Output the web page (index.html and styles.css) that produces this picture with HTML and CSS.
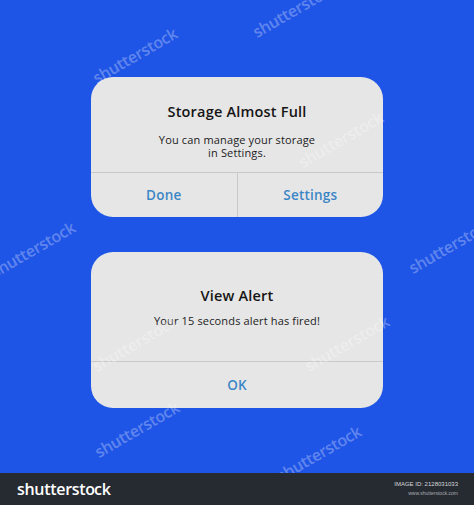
FILE: index.html
```html
<!DOCTYPE html>
<html lang="en">
<head>
  <meta charset="UTF-8" />
  <meta name="viewport" content="width=device-width, initial-scale=1.0"/>
  <title>Alert dialogs</title>
  <link rel="stylesheet" href="styles.css">
</head>
<body>
  <main class="lienzo">
    <!-- ALERTA DE ALMACENAMIENTO -->
    <div class="alerta alerta-storage">
      <div class="alerta-cuerpo">
        <h2>Storage Almost Full</h2>
        <p>You can manage your storage<br>in Settings.</p>
      </div>
      <div class="alerta-botones">
        <button>Done</button>
        <button>Settings</button>
      </div>
    </div>

    <!-- ALERTA DE TEMPORIZADOR -->
    <div class="alerta alerta-timer">
      <div class="alerta-cuerpo">
        <h2>View Alert</h2>
        <p>Your 15 seconds alert has fired!</p>
      </div>
      <div class="alerta-botones">
        <button>OK</button>
      </div>
    </div>

    <!-- marcas de agua -->
    <span class="marca" style="left: 94px; top: 68px;">shutterstock</span>
    <span class="marca" style="left: 254px; top: 22px;">shutterstock</span>
    <span class="marca" style="left: 300px; top: 152px;">shutterstock</span>
    <span class="marca" style="left: 410px; top: 258px;">shutterstock</span>
    <span class="marca" style="left: -8px; top: 262px;">shutterstock</span>
    <span class="marca" style="left: 94px; top: 356px;">shutterstock</span>
    <span class="marca" style="left: 306px; top: 356px;">shutterstock</span>
    <span class="marca" style="left: 96px; top: 442px;">shutterstock</span>
    <span class="marca" style="left: 278px; top: 466px;">shutterstock</span>
  </main>

  <footer class="pie">
    <span class="logo">shutterst<span class="logo-o">o</span>ck</span>
    <div class="pie-info">
      <span>IMAGE ID: 2128031033</span>
      <span class="pie-url">www.shutterstock.com</span>
    </div>
  </footer>
</body>
</html>
```
FILE: styles.css
```css
body {
  margin: 0;
  padding: 0;
  font-family: "Open Sans", "Noto Sans", sans-serif;
  background-color: #1f55e6;
  width: 474px;
  height: 505px;
  overflow: hidden;
}

.lienzo {
  position: relative;
  height: 473px;
  display: flex;
  flex-direction: column;
  align-items: center;
  padding-top: 77px;
  gap: 35px;
  box-sizing: border-box;
  overflow: hidden;
}

.alerta {
  width: 292px;
  background-color: #e6e6e6;
  border-radius: 22px;
  display: flex;
  flex-direction: column;
  overflow: hidden;
}

.alerta-cuerpo {
  text-align: center;
  border-bottom: 1px solid #c9c9c9;
  box-sizing: border-box;
}
.alerta h2 {
  margin: 0;
  font-size: 14.5px;
  font-weight: 600;
  color: #151515;
  letter-spacing: 0.2px;
}
.alerta p {
  margin: 0;
  font-size: 11px;
  line-height: 13px;
  color: #222;
  letter-spacing: 0.15px;
}

.alerta-storage .alerta-cuerpo {
  height: 96px;
  padding-top: 25px;
}
.alerta-storage h2 { margin-bottom: 12px; }

.alerta-timer .alerta-cuerpo {
  height: 110px;
  padding-top: 34px;
}
.alerta-timer h2 { margin-bottom: 9px; }

.alerta-botones {
  display: flex;
}
.alerta-botones button {
  flex: 1;
  background: transparent;
  border: none;
  font-family: inherit;
  font-size: 13.5px;
  font-weight: 600;
  color: #3c86c6;
  letter-spacing: 0.2px;
  padding: 0;
}
.alerta-botones button + button {
  border-left: 1px solid #c9c9c9;
}
.alerta-storage .alerta-botones { height: 44px; }
.alerta-timer .alerta-botones { height: 46px; }

.marca {
  position: absolute;
  font-size: 16px;
  font-weight: 600;
  color: rgba(255, 255, 255, 0.3);
  transform: rotate(-30deg);
  transform-origin: left center;
  white-space: nowrap;
  letter-spacing: -0.3px;
  pointer-events: none;
}

.pie {
  height: 32px;
  background-color: #262a31;
  display: flex;
  align-items: center;
  justify-content: space-between;
  padding: 0 16px 0 17px;
}
.logo {
  color: #fff;
  font-family: "Open Sans", sans-serif;
  font-size: 16px;
  font-weight: 600;
  letter-spacing: -0.3px;
}
.logo-o {
  letter-spacing: -1px;
}
.pie-info {
  display: flex;
  flex-direction: column;
  align-items: flex-end;
  color: #d6d8dc;
  font-family: "Liberation Sans", Arial, sans-serif;
  font-size: 6px;
  line-height: 9px;
}
.pie-url {
  font-size: 5px;
  color: #a9adb3;
}
```
